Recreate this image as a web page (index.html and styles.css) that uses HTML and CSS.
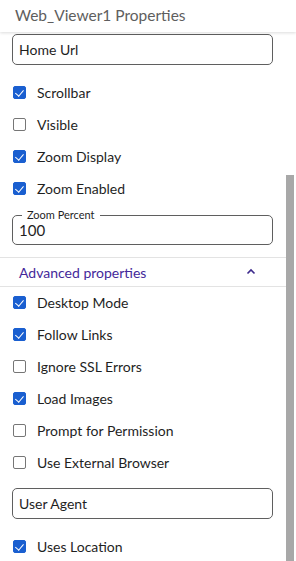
FILE: index.html
```html
<!DOCTYPE html>
<html>
<head>
<meta charset="utf-8">
<link rel="stylesheet" href="styles.css">
</head>
<body>
<div class="panel">
  <div class="header">Web_Viewer1 Properties</div>
  <div class="content">
    <div class="textbox">Home Url</div>
    <div class="rows">
      <div class="row"><span class="cb on"></span><span>Scrollbar</span></div>
      <div class="row"><span class="cb"></span><span>Visible</span></div>
      <div class="row"><span class="cb on"></span><span>Zoom Display</span></div>
      <div class="row"><span class="cb on"></span><span>Zoom Enabled</span></div>
    </div>
    <div class="textbox outlined"><span class="float">Zoom Percent</span><span class="value">100</span></div>
  </div>
  <div class="section">
    <span>Advanced properties</span>
    <svg class="chev" width="10" height="7" viewBox="0 0 10 7"><path d="M1.5 5.5 L5 2 L8.5 5.5" fill="none" stroke="#3d2a8c" stroke-width="1.6"/></svg>
  </div>
  <div class="content">
    <div class="rows first">
      <div class="row"><span class="cb on"></span><span>Desktop Mode</span></div>
      <div class="row"><span class="cb on"></span><span>Follow Links</span></div>
      <div class="row"><span class="cb"></span><span>Ignore SSL Errors</span></div>
      <div class="row"><span class="cb on"></span><span>Load Images</span></div>
      <div class="row"><span class="cb"></span><span>Prompt for Permission</span></div>
      <div class="row"><span class="cb"></span><span>Use External Browser</span></div>
    </div>
    <div class="textbox ua">User Agent</div>
    <div class="rows">
      <div class="row"><span class="cb on"></span><span>Uses Location</span></div>
    </div>
  </div>
  <div class="thumb"></div>
</div>
</body>
</html>
```
FILE: styles.css
```css
* { box-sizing: border-box; }
html, body { margin: 0; padding: 0; background: #fff; }
body { font-family: Lato, "Noto Sans", sans-serif; color: #1f1f1f; }
.panel { position: relative; width: 296px; height: 561px; overflow: hidden; }
.header {
  height: 32px;
  padding-left: 15px;
  font-size: 15.5px;
  line-height: 30px;
  color: #5e5e5e;
  box-shadow: 0 1px 3px rgba(0,0,0,0.14);
  position: relative;
  z-index: 1;
}
.content { width: 286px; padding: 0 13px 0 12px; }
.textbox {
  margin-top: 2px;
  height: 31px;
  border: 1px solid #5f5f5f;
  border-radius: 5px;
  padding-left: 6px;
  font-size: 14px;
  line-height: 29px;
  color: #1f1f1f;
}
.rows { margin-top: 12px; display: flex; flex-direction: column; }
.rows.first { margin-top: 0; }
.row {
  height: 32px;
  display: flex;
  align-items: center;
  gap: 11px;
  padding-left: 1px;
  padding-bottom: 1px;
  font-size: 14px;
  color: #1f1f1f;
}
.cb {
  width: 13px;
  height: 13px;
  border: 1.6px solid #767676;
  border-radius: 2px;
  flex: none;
  position: relative;
}
.cb.on {
  background: #1a5fd0;
  border-color: #1a5fd0;
}
.cb.on::after {
  content: "";
  position: absolute;
  left: 3.2px;
  top: 0.6px;
  width: 3.5px;
  height: 7px;
  border: solid #fff;
  border-width: 0 1.8px 1.8px 0;
  transform: rotate(40deg);
}
.outlined {
  position: relative;
  margin-top: 10px;
  height: 30px;
}
.float {
  position: absolute;
  left: 9px;
  top: -9px;
  padding: 0 5px;
  background: #fff;
  font-size: 11px;
  line-height: 15px;
  color: #1f1f1f;
}
.value { font-size: 15px; line-height: 27px; }
.section {
  margin-top: 12px;
  width: 286px;
  height: 30px;
  border-top: 1px solid #e3e3e3;
  border-bottom: 1px solid #e3e3e3;
  display: flex;
  align-items: center;
  justify-content: space-between;
  padding: 0 30px 0 19px;
  font-size: 14px;
  color: #44289a;
}
.section .chev { margin-top: -2px; }
.ua { margin-top: 9px; }
.thumb {
  position: absolute;
  left: 286px;
  top: 175px;
  width: 8px;
  height: 386px;
  background: #a8a8a8;
}
```
